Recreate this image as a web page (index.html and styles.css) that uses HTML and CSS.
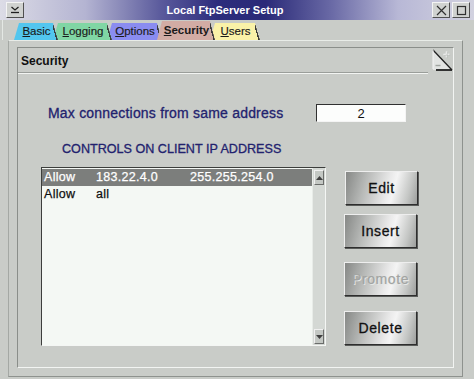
FILE: index.html
```html
<!DOCTYPE html>
<html lang="en">
<head>
    <meta charset="UTF-8">
    <title>Local FtpServer Setup</title>
    <link rel="stylesheet" href="styles.css">
</head>
<body>

<div class="window">
    <div class="titlebar">
        <span class="tb-btn tb-menu">
            <svg width="10" height="8" viewBox="0 0 10 8"><polyline points="1.5,1 5,4 8.5,1" fill="none" stroke="#202020" stroke-width="1.3"/><line x1="1" y1="6.5" x2="9" y2="6.5" stroke="#202020" stroke-width="1.3"/></svg>
        </span>
        <span class="title">Local FtpServer Setup</span>
        <span class="tb-btn">
            <svg width="11" height="11" viewBox="0 0 11 11"><path d="M1 1 L10 10 M10 1 L1 10" stroke="#303030" stroke-width="1.2"/></svg>
        </span>
        <span class="tb-btn">
            <svg width="11" height="11" viewBox="0 0 11 11"><rect x="1.5" y="1.5" width="8" height="8" fill="none" stroke="#303030" stroke-width="1.2"/></svg>
        </span>
    </div>

    <div class="tabs">
        <div class="tab tab-basic"><u>B</u>asic</div>
        <div class="tab tab-logging"><u>L</u>ogging</div>
        <div class="tab tab-options"><u>O</u>ptions</div>
        <div class="tab tab-security active"><u>S</u>ecurity</div>
        <div class="tab tab-users"><u>U</u>sers</div>
    </div>

    <div class="notebook">
        <div class="page">
            <div class="page-head">
                <div class="head-label">Security</div>
                <svg class="page-corner" width="21" height="23" viewBox="0 0 21 23">
                    <polygon points="1,1 20,21 1,21" fill="#e2e4e2"/>
                    <line x1="1" y1="1" x2="20" y2="21" stroke="#202020" stroke-width="1.3"/>
                    <line x1="4" y1="21" x2="20" y2="21" stroke="#202020" stroke-width="1.8"/>
                    <line x1="1" y1="1" x2="1" y2="20" stroke="#f4f4f4" stroke-width="1"/>
                    <path d="M14.5 2.5 V8.5 M11.5 5.5 H17.5" stroke="#f8f8f8" stroke-width="1.4"/>
                    <path d="M14.5 2.5 V8.5 M11.5 5.5 H17.5" stroke="#a0a4a0" stroke-width="0.5" transform="translate(0.6 0.6)"/>
                    <path d="M3.5 16.5 H8.5" stroke="#a0a4a0" stroke-width="1.4"/>
                </svg>
            </div>

            <div class="page-body">
                <div class="max-row">
                    <label for="maxconn" class="field-label">Max connections from same address</label>
                    <input type="text" id="maxconn" class="num-input" value="2">
                </div>

                <div class="section-title">CONTROLS ON CLIENT IP ADDRESS</div>

                <div class="controls">
                    <div class="listbox">
                        <div class="list">
                            <div class="list-row selected"><span>Allow</span><span>183.22.4.0</span><span>255.255.254.0</span></div>
                            <div class="list-row"><span>Allow</span><span>all</span><span></span></div>
                        </div>
                        <div class="scrollbar">
                            <span class="sb-btn"><svg width="7" height="4" viewBox="0 0 7 4"><polygon points="3.5,0 7,4 0,4" fill="#404040"/></svg></span>
                            <span class="sb-btn"><svg width="7" height="4" viewBox="0 0 7 4"><polygon points="0,0 7,0 3.5,4" fill="#404040"/></svg></span>
                        </div>
                    </div>

                    <div class="actions">
                        <button class="btn btn-edit">Edit</button>
                        <button class="btn btn-insert">Insert</button>
                        <button class="btn btn-promote" disabled>Promote</button>
                        <button class="btn btn-delete">Delete</button>
                    </div>
                </div>
            </div>
        </div>
    </div>
</div>

</body>
</html>
```

FILE: styles.css
```css
* {
    box-sizing: border-box;
}

body {
    margin: 0;
    padding: 0;
    font-family: 'Liberation Sans', Arial, sans-serif;
    background-color: #c9ccc8;
}

.window {
    width: 474px;
    height: 379px;
    background-color: #c9ccc8;
    overflow: hidden;
}

/* title bar */
.titlebar {
    height: 20px;
    display: flex;
    align-items: center;
    padding: 0 4px 0 6px;
    background: linear-gradient(to right, #dcdce6 0%, #b4b4d2 18%, #5a5a9c 34%, #2c2c7c 46%, #2a2a78 56%, #6a6aa6 70%, #b8b8d6 84%, #d2d2e0 100%);
}

.tb-btn {
    width: 18px;
    height: 16px;
    display: flex;
    align-items: center;
    justify-content: center;
    background-color: #d0d2d0;
    border: 1px solid;
    border-color: #f4f4f4 #505050 #505050 #f4f4f4;
}

.tb-btn + .tb-btn {
    margin-left: 2px;
}

.title {
    flex: 1;
    text-align: center;
    color: #fff;
    font-weight: bold;
    font-size: 11px;
    padding-right: 6px;
}

/* tabs */
.tabs {
    height: 20px;
    display: flex;
    align-items: flex-end;
    border-left: 1px solid #e4e8e4;
    margin-left: 2px;
    padding-left: 11px;
}

.tab {
    position: relative;
    height: 17px;
    font-size: 11.5px;
    line-height: 17px;
    text-align: center;
    color: #1a1a1a;
    margin-left: -5px;
    padding-left: 1px;
    -webkit-text-stroke: 0.15px #1a1a1a;
    clip-path: polygon(5px 0, calc(100% - 5px) 0, 100% 100%, 0 100%);
}

.tab::after {
    content: "";
    position: absolute;
    top: 0;
    right: 0;
    width: 5px;
    height: 100%;
    background: linear-gradient(to top right, transparent calc(50% - 1.5px), #3a3a3a calc(50% - 1.5px), #3a3a3a 50%, transparent 50%);
}

.tab-basic { width: 44px; margin-left: 0; background-color: #52c6ee; z-index: 5; }
.tab-logging { width: 59px; background-color: #80d6a4; z-index: 4; }
.tab-options { width: 55px; background-color: #8a8cf0; z-index: 3; }
.tab-security { width: 58px; background-color: #d2aca4; z-index: 6; }
.tab-users { width: 50px; background-color: #faf2a8; z-index: 1; }

.tab.active {
    height: 19px;
    font-weight: bold;
    line-height: 18px;
    -webkit-text-stroke: 0;
}

/* notebook */
.notebook {
    margin-left: 8px;
    width: 455px;
    height: 337px;
    border: 1px solid;
    border-color: #e8ece8 #8e928e #8e928e #a4a8a4;
    padding: 6px 8px 8px 8px;
}

.page {
    height: 100%;
    border: 1px solid;
    border-color: #8a8e8a #f2f4f2 #f2f4f2 #8a8e8a;
}

.page-head {
    display: flex;
    align-items: flex-start;
    height: 26px;
}

.head-label {
    flex: 1;
    height: 25px;
    padding: 6px 0 0 3px;
    font-size: 12px;
    font-weight: bold;
    color: #101010;
    border-bottom: 1px solid #9a9e9a;
    box-shadow: 0 1px 0 #f2f4f2;
}

.page-corner {
    margin: 1px 0 0 4px;
}

.page-body {
    padding: 0 0 0 23px;
}

.max-row {
    display: flex;
    align-items: center;
    margin-top: 30px;
}

.field-label {
    width: 268px;
    margin-left: 7px;
    font-size: 14px;
    letter-spacing: 0.2px;
    color: #22226e;
    -webkit-text-stroke: 0.3px #22226e;
}

.num-input {
    width: 90px;
    height: 18px;
    padding: 0;
    text-align: center;
    font-family: 'Liberation Sans', Arial, sans-serif;
    font-size: 13px;
    color: #101010;
    background-color: #fcfdfc;
    border: 1px solid;
    border-color: #303030 #f4f4f4 #f4f4f4 #303030;
    outline: none;
}

.section-title {
    margin: 19px 0 0 21px;
    font-size: 12.6px;
    line-height: 16px;
    color: #22226e;
    -webkit-text-stroke: 0.3px #22226e;
}

.controls {
    display: flex;
    align-items: flex-start;
    margin-top: 10px;
}

/* list */
.listbox {
    width: 285px;
    height: 179px;
    display: flex;
    border: 1px solid;
    border-color: #3c3e3c #f4f6f4 #f4f6f4 #3c3e3c;
}

.list {
    flex: 1;
    background-color: #f4f8f4;
    padding-top: 1px;
}

.list-row {
    display: grid;
    grid-template-columns: 52px 94px auto;
    height: 17px;
    padding-left: 2px;
    font-size: 12.5px;
    line-height: 16px;
    letter-spacing: 0.3px;
    color: #101010;
    -webkit-text-stroke: 0.25px #101010;
}

.list-row.selected {
    background-color: #7c7e7c;
    color: #fff;
    -webkit-text-stroke: 0.25px #fff;
}

.scrollbar {
    width: 13px;
    display: flex;
    flex-direction: column;
    justify-content: space-between;
    padding: 2px 1px 1px 1px;
    background-color: #d4d8d4;
    border-left: 1px solid #e8ece8;
}

.sb-btn {
    height: 15px;
    display: flex;
    align-items: center;
    justify-content: center;
    background-color: #c4c8c4;
    border: 1px solid;
    border-color: #f0f0f0 #6a6c6a #6a6c6a #f0f0f0;
}

/* buttons */
.actions {
    display: flex;
    flex-direction: column;
    margin-left: 18px;
    padding-top: 4px;
}

.btn {
    width: 73px;
    height: 34px;
    padding: 0;
    font-family: 'Liberation Sans', Arial, sans-serif;
    font-size: 14px;
    letter-spacing: 0.6px;
    color: #101010;
    -webkit-text-stroke: 0.3px #101010;
    border: 1px solid;
    border-color: #eeeeee #2e2e2e #2e2e2e #eeeeee;
    box-shadow: 1px 1px 0 #5a5c5a;
    background: linear-gradient(105deg, #868886 0%, #b8bab8 28%, #eaeaea 58%, #f4f4f4 66%, #c4c6c4 86%, #9c9e9c 100%);
    cursor: pointer;
}

.btn-edit { margin-left: 1px; }
.btn-insert { margin-top: 9px; }
.btn-promote {
    margin-top: 14px;
    color: #a2a4a2;
    -webkit-text-stroke: 0.2px #a2a4a2;
    text-shadow: 1px 1px 0 #e6e8e6;
}
.btn-delete { margin-top: 15px; }
```
